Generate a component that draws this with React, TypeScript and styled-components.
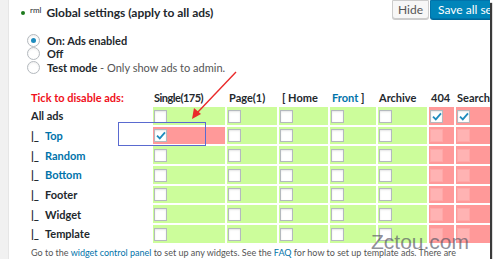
import React from "react";
import styled, { createGlobalStyle } from "styled-components";

const Global = createGlobalStyle`
  html, body { margin: 0; padding: 0; background: #fff; }
  body { font-family: Lato, "Open Sans", sans-serif; }
`;

const Frame = styled.div`
  position: relative;
  width: 490px;
  height: 259px;
  overflow: hidden;
  display: flex;
  box-shadow: 2px 3px 1px #3a3a3a;
  background: #fff;
`;

const Strip = styled.div`
  width: 8px;
  flex: none;
  background: #f1f1f1;
  border-right: 1px solid #e6e6e6;
`;

const Panel = styled.div`
  flex: 1;
  min-width: 0;
  background: #fff;
  color: #333;
  font-size: 11px;
`;

const Header = styled.div`
  display: flex;
  align-items: flex-start;
  height: 22px;
`;

const Title = styled.div`
  display: flex;
  align-items: center;
  padding: 5px 0 0 12px;
  font-weight: 700;
  font-size: 12px;
  color: #23282d;
  white-space: nowrap;
  flex: 1;
`;

const Dot = styled.span`
  width: 4px;
  height: 4px;
  border-radius: 50%;
  background: #1d7a1d;
  margin-right: 5px;
`;

const Sup = styled.span`
  font-size: 8px;
  font-weight: 400;
  margin-right: 5px;
  position: relative;
  top: -3px;
`;

const Buttons = styled.div`
  display: flex;
  gap: 1px;
  flex: none;
  margin-right: -15px;
`;

const Button = styled.button<{ $primary?: boolean }>`
  font-family: inherit;
  font-size: 12px;
  height: 19px;
  line-height: 17px;
  width: ${(p) => (p.$primary ? "75px" : "37px")};
  padding: 0 ${(p) => (p.$primary ? "0 0 7px" : "0")};
  text-align: ${(p) => (p.$primary ? "left" : "center")};
  border: 1px solid ${(p) => (p.$primary ? "#0073aa" : "#ccc")};
  background: ${(p) => (p.$primary ? "#0085ba" : "#f7f7f7")};
  color: ${(p) => (p.$primary ? "#fff" : "#555")};
  border-radius: 0 0 3px 3px;
  box-shadow: 0 1px 0 ${(p) => (p.$primary ? "#006799" : "#ccc")};
  white-space: nowrap;
  overflow: hidden;
`;

const Radios = styled.div`
  display: flex;
  flex-direction: column;
  gap: 1.5px;
  padding: 12px 0 0 18px;
`;

const RadioRow = styled.label`
  display: flex;
  align-items: center;
  height: 12px;
  gap: 7px;
  font-weight: 700;
  color: #23282d;
  white-space: nowrap;
`;

const Radio = styled.span<{ $on?: boolean }>`
  width: 11px;
  height: 11px;
  border-radius: 50%;
  border: 1px solid #b4b9be;
  background: #fff;
  box-shadow: inset 0 1px 2px rgba(0, 0, 0, 0.07);
  display: flex;
  align-items: center;
  justify-content: center;
  &::after {
    content: "";
    width: 5px;
    height: 5px;
    border-radius: 50%;
    background: ${(p) => (p.$on ? "#1e8cbe" : "transparent")};
  }
`;

const Note = styled.span`
  font-weight: 400;
  color: #555;
`;

const Table = styled.div`
  display: grid;
  grid-template-columns: 120px 72px 50px 49px 46px 49px 25px 40px;
  grid-template-rows: 16px;
  grid-auto-rows: 17.7px;
  column-gap: 2px;
  row-gap: 2px;
  margin: 16px 0 0 22px;
  font-weight: 700;
  color: #23282d;
  white-space: nowrap;
`;

const HeadCell = styled.div<{ $red?: boolean; $indent?: number; $tight?: boolean }>`
  display: flex;
  align-items: center;
  padding-left: ${(p) => p.$indent ?? 1}px;
  letter-spacing: ${(p) => (p.$tight ? "-0.5px" : "0")};
  color: ${(p) => (p.$red ? "#f01020" : "#23282d")};
`;

const Blue = styled.span`
  color: #0073aa;
`;

const Label = styled.div<{ $blue?: boolean }>`
  display: flex;
  align-items: center;
  color: ${(p) => (p.$blue ? "#0073aa" : "#23282d")};
`;

const Pipe = styled.span`
  color: #23282d;
  width: 14px;
`;

const Cell = styled.div<{ $tone: "green" | "red" }>`
  background: ${(p) => (p.$tone === "green" ? "#ccfd9b" : "#ff9999")};
  display: flex;
  align-items: flex-end;
  padding: 0 0 2px 1px;
  box-sizing: border-box;
`;

const Box = styled.span<{ $disabled?: boolean }>`
  width: 11px;
  height: 11px;
  display: flex;
  align-items: center;
  justify-content: center;
  border: 1px solid ${(p) => (p.$disabled ? "#ffa8a8" : "#b4b9be")};
  background: ${(p) => (p.$disabled ? "#ffb3b3" : "#fff")};
  box-shadow: ${(p) => (p.$disabled ? "none" : "inset 0 1px 2px rgba(0,0,0,0.1)")};
`;

const Footer = styled.div`
  margin: 4px 0 0 22px;
  font-size: 9px;
  line-height: 12px;
  color: #555;
  white-space: nowrap;
`;

const Link = styled.span`
  color: #0073aa;
`;

const Mark = styled.div`
  position: absolute;
  left: 371px;
  top: 230px;
  font-family: "Liberation Sans", sans-serif;
  font-weight: 400;
  font-size: 21px;
  line-height: 24px;
  color: rgba(80, 80, 95, 0.65);
`;

const Highlight = styled.div`
  position: absolute;
  left: 118px;
  top: 122px;
  width: 86px;
  height: 22px;
  border: 1.5px solid #5a6ad0;
`;

const Overlay = styled.svg`
  position: absolute;
  left: 0;
  top: 0;
  pointer-events: none;
`;

const Check = () => (
  <svg width="10" height="9" viewBox="0 0 10 9">
    <path d="M1 4.6 L3.8 7.4 L9 1.4" fill="none" stroke="#1e8cbe" strokeWidth="1.8" />
  </svg>
);

type Row = { name: string; sub?: boolean; blue?: boolean };
const rows: Row[] = [
  { name: "All ads" },
  { name: "Top", sub: true, blue: true },
  { name: "Random", sub: true, blue: true },
  { name: "Bottom", sub: true, blue: true },
  { name: "Footer", sub: true },
  { name: "Widget", sub: true },
  { name: "Template", sub: true },
];

export default function App() {
  return (
    <>
      <Global />
      <Frame>
        <Strip />
        <Panel>
          <Header>
            <Title>
              <Dot />
              <Sup>rml</Sup>
              Global settings (apply to all ads)
            </Title>
            <Buttons>
              <Button>Hide</Button>
              <Button $primary>Save all settings</Button>
            </Buttons>
          </Header>
          <Radios>
            <RadioRow>
              <Radio $on />
              On: Ads enabled
            </RadioRow>
            <RadioRow>
              <Radio />
              Off
            </RadioRow>
            <RadioRow>
              <Radio />
              <span>
                Test mode <Note>- Only show ads to admin.</Note>
              </span>
            </RadioRow>
          </Radios>
          <Table>
            <HeadCell $red $indent={0}>Tick to disable ads:</HeadCell>
            <HeadCell $tight>Single(175)</HeadCell>
            <HeadCell $indent={2}>Page(1)</HeadCell>
            <HeadCell $indent={3}>[ Home</HeadCell>
            <HeadCell $indent={2}>
              <Blue>Front</Blue>&nbsp;]
            </HeadCell>
            <HeadCell>Archive</HeadCell>
            <HeadCell $indent={2}>404</HeadCell>
            <HeadCell>Search</HeadCell>
            {rows.map((r, i) => (
              <React.Fragment key={r.name}>
                <Label $blue={r.blue}>
                  {r.sub && <Pipe>|_</Pipe>}
                  {r.name}
                </Label>
                {Array.from({ length: 7 }).map((_, c) => {
                  const redCol = c >= 5;
                  const topSingle = i === 1 && c === 0;
                  const checked = (i === 0 && redCol) || topSingle;
                  const disabled = redCol && i > 0;
                  return (
                    <Cell key={c} $tone={redCol || topSingle ? "red" : "green"}>
                      <Box $disabled={disabled}>{checked && <Check />}</Box>
                    </Cell>
                  );
                })}
              </React.Fragment>
            ))}
          </Table>
          <Footer>
            Go to the <Link>widget control panel</Link> to set up any widgets. See the{" "}
            <Link>FAQ</Link> for how to set up template ads. There are
          </Footer>
        </Panel>
        <Highlight />
        <Overlay width="490" height="259">
          <line x1="236" y1="72" x2="197" y2="113" stroke="#ea2a2a" strokeWidth="1.4" />
          <polygon points="192,119 194,108 201,114" fill="#ea2a2a" />
        </Overlay>
        <Mark>Zctou.com</Mark>
      </Frame>
    </>
  );
}
